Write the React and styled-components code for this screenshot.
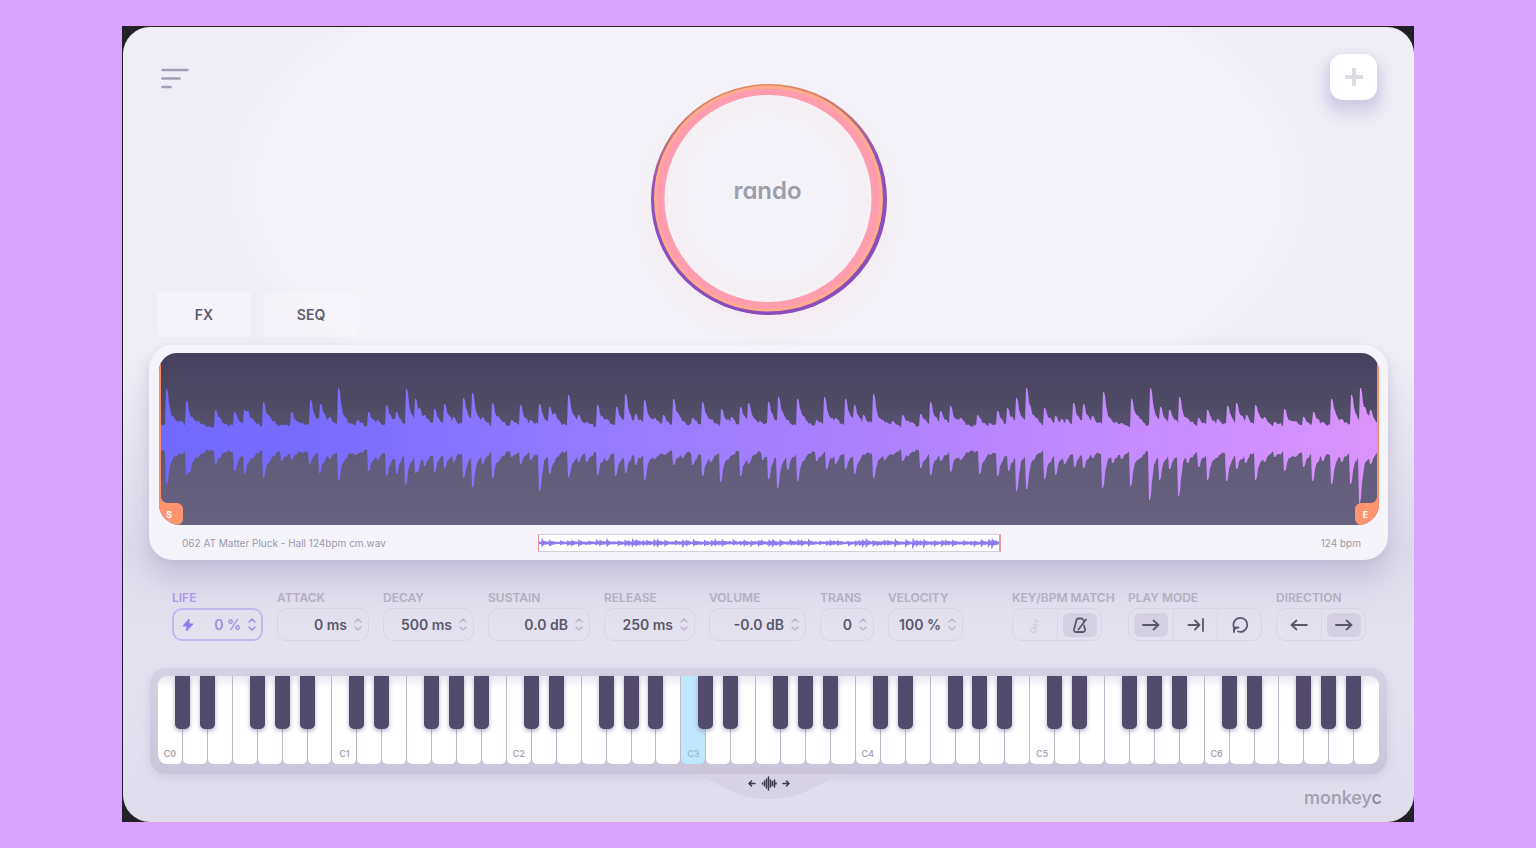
import { useState } from "react";
import styled, { createGlobalStyle, css } from "styled-components";

const GlobalStyle = createGlobalStyle`
  *,
  *::before,
  *::after {
    box-sizing: border-box;
  }
  body {
    margin: 0;
    background: #daa3ff;
    font-family: Inter, "Liberation Sans", sans-serif;
    color: #56526a;
  }
  button {
    padding: 0;
    border: 0;
    background: none;
    font: inherit;
    color: inherit;
    cursor: pointer;
  }
`;

const Page = styled.main`
  min-height: 100vh;
  padding: 26px 122px;
`;
const Frame = styled.div`
  padding: 1px 0 0 1px;
  background: #242028;
`;
const Panel = styled.div`
  border-radius: 27px;
  overflow: hidden;
  background:
    radial-gradient(ellipse 540px 270px at 50% 160px, #f4f3f9 94%, transparent 100%),
    linear-gradient(#efeef6 0, #efeef6 330px, #dedbea 520px, #e5e2f0 620px, #dfdcec 100%);
`;

/* ---- header ---- */
const Header = styled.header`
  display: grid;
  grid-template-columns: 1fr auto 1fr;
  grid-template-rows: auto 1fr;
  padding: 0 34px;
`;
const MenuButton = styled.button`
  justify-self: start;
  height: 28px;
  margin: 38px 0 0 4px;
`;
const AddButton = styled.button`
  display: grid;
  place-items: center;
  justify-self: end;
  width: 47px;
  height: 46px;
  margin: 27px 3px 0 0;
  border-radius: 13px;
  background: #fff;
  box-shadow:
    0 4px 8px rgba(170, 164, 205, 0.3),
    0 10px 12px 7px rgba(190, 184, 218, 0.4);
`;
const Dial = styled.button`
  grid-column: 2;
  grid-row: 1 / 3;
  position: relative;
  width: 236px;
  height: 231px;
  margin: 57px 0 22px;
  border-radius: 50%;
  box-shadow: 0 12px 24px rgba(255, 190, 200, 0.16);
`;
const DialRing = styled.svg`
  display: block;
`;
const DialName = styled.span`
  position: absolute;
  inset: 0;
  display: grid;
  place-items: center;
  padding: 0 2px 18px 0;
  font-size: 24px;
  font-weight: 600;
  line-height: 32px;
  font-feature-settings: "cv11";
  color: #9f9cae;
`;
const Tabs = styled.nav`
  grid-column: 1;
  grid-row: 2;
  align-self: end;
  display: flex;
  gap: 13px;
`;
const Tab = styled.button`
  width: 94px;
  height: 45px;
  padding-bottom: 1px;
  border-radius: 4px;
  background: rgba(247, 246, 251, 0.6);
  font-size: 14px;
  font-weight: 600;
  color: #605c70;
`;

/* ---- sample card ---- */
const SampleCard = styled.section`
  margin: 8px 26px 0;
  padding: 8px 9px 0 10px;
  border-radius: 24px;
  background: #f5f4fa;
  box-shadow:
    0 4px 8px rgba(160, 152, 190, 0.2),
    0 20px 28px rgba(158, 150, 188, 0.34);
`;
const WaveArea = styled.div`
  position: relative;
  height: 172px;
  border-radius: 18px 18px 21px 21px;
  overflow: hidden;
  background: linear-gradient(#45415d, #504b65 30%, #625c7b 62%, #67617f);
`;
const WaveSvg = styled.svg`
  display: block;
  width: 100%;
  height: 100%;
`;
const Marker = styled.div`
  position: absolute;
  top: 8px;
  bottom: 0;
  width: 2px;
  background: #fb8d6b;
  ${(p) => (p.$end ? "right: 0;" : "left: 0;")}
`;
const MarkerHandle = styled.button`
  position: absolute;
  bottom: 0;
  width: 24px;
  height: 22px;
  background: #ff946f;
  font-size: 9px;
  font-weight: 700;
  color: #fff;
  ${(p) =>
    p.$end
      ? "right: 0; padding-right: 3px; border-radius: 7px 0 20px 7px;"
      : "left: 0; padding-right: 4px; border-radius: 0 7px 7px 20px;"}

  &::before {
    content: "";
    position: absolute;
    top: -5px;
    width: 5px;
    height: 5px;
    ${(p) =>
      p.$end
        ? "right: 2px; background: radial-gradient(circle at 0 0, transparent 4px, #ff946f 5px);"
        : "left: 2px; background: radial-gradient(circle at 100% 0, transparent 4px, #ff946f 5px);"}
  }
`;
const SampleFooter = styled.div`
  display: grid;
  grid-template-columns: 1fr 463px 1fr;
  align-items: center;
  height: 35px;
  padding: 0 18px;
  font-size: 10px;
  color: #9c99ab;
`;
const FileName = styled.span`
  padding-left: 5px;
`;
const Overview = styled.div`
  height: 18px;
  border: 1px solid #d3cfe0;
  border-left-color: #e68c9c;
  border-right: 2px solid #e99a98;
  background: #fff;
`;
const Bpm = styled.span`
  text-align: right;
`;

/* ---- controls ---- */
const Controls = styled.section`
  display: flex;
  flex-wrap: wrap;
  justify-content: space-between;
  padding: 30px 48px 0 49px;
`;
const ControlGroup = styled.div`
  display: flex;
  gap: 14px;
`;
const Control = styled.div`
  display: flex;
  flex-direction: column;
  gap: 2px;
`;
const labelText = css`
  font-size: 12px;
  font-weight: 600;
  line-height: 16px;
  white-space: nowrap;
  color: #b3afc1;
`;
const FieldLabel = styled.label`
  ${labelText}
  ${(p) => p.$active && "color: #a898ee;"}
`;
const GroupLabel = styled.span`
  ${labelText}
`;
const Field = styled.div`
  display: flex;
  align-items: center;
  width: ${(p) => p.$width}px;
  height: 33px;
  padding: 0 6px 0 9px;
  border: 1px solid #d8d4e4;
  border-radius: 10px;
  color: #bcb8ca;
  ${(p) =>
    p.$active &&
    css`
      border: 2px solid #c2b8ee;
      padding: 0 5px 0 8px;
      color: #9b8bea;
    `}
`;
const FieldInput = styled.input`
  flex: 1;
  min-width: 0;
  width: 100%;
  padding: 0;
  border: 0;
  outline: 0;
  background: none;
  font: 600 14px/20px Inter, "Liberation Sans", sans-serif;
  text-align: right;
  color: ${(p) => (p.$active ? "#a094de" : "#5b576b")};
`;
const Stepper = styled.span`
  display: flex;
  flex-direction: column;
  gap: 3px;
  margin-left: 7px;
`;
const StepButton = styled.button`
  display: block;
  height: 6px;
  line-height: 0;
`;
const Segments = styled.div`
  display: flex;
  align-self: start;
  height: 33px;
  border: 1px solid #d8d4e4;
  border-radius: 10px;
`;
const Segment = styled.button`
  display: grid;
  place-items: center;
  width: 44px;
  color: #5b576b;

  & + & {
    border-left: 1px solid #dad6e6;
  }
`;
const SegmentFace = styled.span`
  display: grid;
  place-items: center;
  width: 34px;
  height: 24px;
  border-radius: 6px;
  background: ${(p) => (p.$on ? "#d4d0e2" : "transparent")};
`;

/* ---- keyboard ---- */
const Tray = styled.section`
  margin: 27px 27px 0;
  padding: 8px 8px 10px;
  border-radius: 16px;
  background: linear-gradient(#d5d1e2, #cac5d9);
  box-shadow: 0 3px 10px rgba(170, 163, 200, 0.3);
`;
const Keys = styled.div`
  display: flex;
  height: 88px;
`;
const KeySlot = styled.div`
  position: relative;
  flex: 1;
`;
const WhiteKey = styled.button`
  display: flex;
  align-items: flex-end;
  justify-content: center;
  width: 100%;
  height: 100%;
  padding-bottom: 3px;
  border-right: 1px solid #bdb9cb;
  border-radius: 0 0 5px 5px;
  background: ${(p) =>
    p.$pressed ? "#bfe7fe" : "linear-gradient(#ebe9f3, #fff 12px)"};
  font-size: 9px;
  line-height: 14px;
  font-weight: 600;
  color: ${(p) => (p.$pressed ? "#96bcd6" : "#aaa7b4")};

  ${KeySlot}:first-child & {
    border-radius: 9px 0 5px 9px;
  }
  ${KeySlot}:last-child & {
    border-right: 0;
    border-radius: 0 9px 9px 5px;
  }
`;
const BlackKey = styled.button`
  position: absolute;
  top: 0;
  right: -7px;
  z-index: 1;
  width: 15px;
  height: 53px;
  border-radius: 0 0 5px 5px;
  background: #524b6b;
  box-shadow: 0 2px 4px rgba(110, 100, 150, 0.5);
`;

/* ---- footer ---- */
const Footer = styled.footer`
  display: grid;
  grid-template-columns: 1fr 176px 1fr;
  height: 48px;
`;
const RangeHandle = styled.button`
  grid-column: 2;
  height: 28px;
`;
const Brand = styled.a`
  justify-self: end;
  margin: 12px 32px 0 0;
  font-size: 18px;
  font-weight: 500;
  line-height: 24px;
  text-decoration: none;
  color: #a09daf;
`;
const BrandEnd = styled.span`
  color: #8a8799;
`;

// Transients of the loaded sample as [x, y] on the wave canvas.
const CANVAS = { x: 159, y: 353, width: 1220, height: 172, mid: 440 };

const PEAKS_UP = [
  [160, 424], [167, 389], [173, 416], [180, 421], [187, 401], [204, 427], [216, 410], [235, 412], [245, 410], [248, 411],
  [264, 402], [283, 425], [292, 412], [299, 422], [311, 400], [321, 404], [330, 417], [339, 388], [344, 416],
  [358, 420], [369, 412], [378, 420], [387, 405], [397, 412], [407, 389], [416, 399], [420, 408], [425, 415],
  [435, 409], [445, 404], [454, 417], [464, 398], [473, 393], [483, 417], [493, 403], [512, 420],
  [521, 405], [531, 420], [540, 404], [550, 407], [555, 413], [569, 395], [579, 415], [588, 423], [598, 405],
  [607, 419], [617, 407], [626, 394], [636, 414], [645, 400], [655, 418], [664, 415], [674, 399],
  [683, 421], [693, 418], [703, 402], [712, 423], [722, 409], [732, 417], [741, 407], [749, 403],
  [760, 421], [769, 402], [779, 397], [788, 421], [798, 399], [807, 422], [817, 420], [825, 397],
  [836, 418], [846, 399], [855, 405], [864, 415], [874, 394], [883, 420], [893, 421], [903, 415],
  [912, 422], [921, 414], [931, 402], [941, 411], [951, 406], [961, 418], [970, 427], [978, 415],
  [990, 423], [998, 411], [1008, 408], [1017, 398], [1027, 388], [1030, 405], [1037, 418], [1045, 408],
  [1056, 416], [1062, 419], [1067, 419], [1074, 403], [1084, 404], [1093, 416], [1104, 392], [1112, 422],
  [1122, 423], [1132, 399], [1141, 419], [1151, 388], [1161, 407], [1170, 410], [1180, 397],
  [1188, 420], [1199, 418], [1208, 410], [1218, 419], [1228, 406], [1237, 403], [1247, 415],
  [1256, 405], [1265, 417], [1275, 422], [1285, 409], [1294, 421], [1304, 417], [1314, 412],
  [1323, 422], [1332, 399], [1342, 419], [1352, 395], [1361, 388], [1365, 407], [1371, 410], [1376, 422],
];
const PEAKS_DOWN = [
  [167, 484], [187, 475], [190, 472], [216, 464], [235, 471], [245, 474], [264, 478], [282, 461], [292, 460],
  [310, 464], [320, 473], [330, 459], [339, 480], [355, 455], [369, 471], [378, 460], [387, 476],
  [397, 474], [406, 485], [416, 473], [418, 472], [425, 466], [435, 472], [445, 468], [454, 462], [464, 478],
  [473, 487], [483, 464], [493, 478], [512, 457], [521, 464], [531, 460], [540, 491], [550, 474],
  [569, 477], [579, 462], [587, 462], [598, 475], [607, 461], [616, 476], [626, 473], [636, 465],
  [645, 480], [655, 459], [665, 455], [674, 465], [683, 458], [693, 465], [703, 476], [711, 462],
  [721, 482], [741, 476], [749, 464], [763, 460], [769, 479], [778, 488], [788, 470], [798, 481],
  [817, 461], [827, 469], [836, 464], [846, 469], [855, 474], [874, 478], [885, 460], [893, 455],
  [903, 461], [921, 468], [931, 475], [941, 461], [951, 472], [961, 460], [980, 474], [998, 476],
  [1009, 471], [1017, 491], [1027, 489], [1045, 479], [1056, 475], [1065, 464], [1075, 467],
  [1084, 468], [1093, 458], [1103, 488], [1113, 463], [1122, 459], [1131, 486], [1141, 458],
  [1150, 500], [1160, 480], [1170, 469], [1179, 496], [1188, 463], [1199, 467], [1208, 480],
  [1217, 458], [1227, 481], [1237, 469], [1246, 463], [1256, 480], [1265, 462], [1275, 457],
  [1285, 471], [1295, 457], [1304, 467], [1313, 481], [1323, 461], [1332, 484], [1342, 462],
  [1351, 484], [1360, 503], [1363, 470], [1371, 464],
];

// Height of the envelope at x: a narrow attack, then a wide decaying shoulder.
function envelope(peaks, x, floor) {
  const step = Math.floor(x / 2);
  const ripple = Math.sin(step * 2.3) * 1.3 + Math.sin(step * 0.71) * 1.3;
  let height = floor + ripple;
  peaks.forEach(([px, py]) => {
    const dx = x - px;
    const rise = Math.abs(py - CANVAS.mid) - floor;
    if (dx < -2 || dx > 24) return;
    if (dx >= -1 && dx <= 1) {
      height = Math.max(height, floor + rise * (dx === 1 ? 0.9 : 1));
    } else if (dx > 1) {
      const shoulder = Math.min(rise * 0.62, 17) * Math.exp(-(dx - 2) / 7);
      height = Math.max(height, floor + shoulder + ripple * 0.8);
      if (dx < 4) height = Math.max(height, floor + rise * (0.9 - dx * 0.14));
    }
  });
  return height;
}

function buildWave() {
  const top = [];
  const bottom = [];
  for (let x = CANVAS.x; x <= CANVAS.x + CANVAS.width; x += 1) {
    top.push(`${x} ${(CANVAS.mid - envelope(PEAKS_UP, x, 13)).toFixed(1)}`);
    bottom.unshift(`${x} ${(CANVAS.mid + envelope(PEAKS_DOWN, x, 10)).toFixed(1)}`);
  }
  return `M${top.join("L")}L${bottom.join("L")}Z`;
}

const WAVE_PATH = buildWave();
const WAVE_VIEW = `${CANVAS.x} ${CANVAS.y} ${CANVAS.width} ${CANVAS.height}`;

function Wave({ fill, label }) {
  return (
    <WaveSvg viewBox={WAVE_VIEW} preserveAspectRatio="none" role="img" aria-label={label}>
      <defs>
        <linearGradient id="wave" x1="0" x2="1">
          <stop offset="0" stopColor="#7269ff" />
          <stop offset="0.12" stopColor="#786bff" />
          <stop offset="0.35" stopColor="#947aff" />
          <stop offset="0.6" stopColor="#ae82ff" />
          <stop offset="0.8" stopColor="#c58bff" />
          <stop offset="1" stopColor="#dc93fb" />
        </linearGradient>
      </defs>
      <path d={WAVE_PATH} fill={fill} />
    </WaveSvg>
  );
}

const ICONS = {
  note: (
    <g stroke="#d3cfde" strokeWidth="1.5">
      <circle cx="7" cy="14" r="2.5" />
      <path d="M9.5 14V3.5c0 2 1.500 2 3.500 2M8 9h4" />
    </g>
  ),
  metronome: (
    <path d="M10.500 2.500H7.500a2 2 0 0 0-2 1.500L3 13.500a2 2 0 0 0 2 2.500h7a2 2 0 0 0 2-2.500l-1-4M13 6l-1-2.500a1.500 1.500 0 0 0-1.500-1M7.500 13.500l7.500-10" />
  ),
  right: <path d="M1 9h15.500M11.500 4.500L16.500 9l-5 4.500" />,
  rightEnd: <path d="M1.500 9h10.500M8 4.500L12.500 9 8 13.500M16 3v12" />,
  left: <path d="M17 9H1.500M6.500 4.500L1.500 9l5 4.500" />,
  loop: (
    <g>
      <path d="M2.500 10.500A7 7 0 1 1 7 15.500" />
      <path d="M3 11.500v4.500M3 11.500h4.500" />
      <path d="M2.500 11h5l-5 4.500z" fill="currentColor" stroke="none" />
    </g>
  ),
};

function Icon({ name }) {
  return (
    <svg
      width="18"
      height="18"
      viewBox="0 0 18 18"
      fill="none"
      stroke="currentColor"
      strokeWidth="1.8"
      strokeLinecap="round"
      strokeLinejoin="round"
      aria-hidden="true"
    >
      {ICONS[name]}
    </svg>
  );
}

const FIELDS = [
  { id: "life", label: "LIFE", value: "0 %", width: 91, active: true },
  { id: "attack", label: "ATTACK", value: "0 ms", width: 92 },
  { id: "decay", label: "DECAY", value: "500 ms", width: 91 },
  { id: "sustain", label: "SUSTAIN", value: "0.0 dB", width: 102 },
  { id: "release", label: "RELEASE", value: "250 ms", width: 91 },
  { id: "volume", label: "VOLUME", value: "-0.0 dB", width: 97 },
  { id: "trans", label: "TRANS", value: "0", width: 54 },
  { id: "velocity", label: "VELOCITY", value: "100 %", width: 75 },
];

const SEGMENTS = [
  { label: "KEY/BPM MATCH", initial: 1, minWidth: 102, items: ["note", "metronome"] },
  { label: "PLAY MODE", initial: 0, items: ["right", "rightEnd", "loop"] },
  { label: "DIRECTION", initial: 1, items: ["left", "right"] },
];

const SegmentControl = styled(Control)`
  width: ${(p) => (p.$width ? `${p.$width}px` : "auto")};
`;

function NumberField({ id, label, value, width, active }) {
  return (
    <Control>
      <FieldLabel htmlFor={id} $active={active}>
        {label}
      </FieldLabel>
      <Field $width={width} $active={active}>
        {active && (
          <svg width="12" height="14" viewBox="0 0 12 14" aria-hidden="true">
            <path
              d="M7 1L1 8h4L4.500 13 11 6H7z"
              fill="#8f7ff0"
              stroke="#8f7ff0"
              strokeLinejoin="round"
            />
          </svg>
        )}
        <FieldInput id={id} defaultValue={value} $active={active} />
        <Stepper>
          {["M1 5l3-3 3 3", "M1 1l3 3 3-3"].map((d, i) => (
            <StepButton key={d} aria-label={`${label} ${i ? "down" : "up"}`}>
              <svg width="8" height="6" viewBox="0 0 8 6" fill="none" stroke="currentColor" strokeWidth="1.500">
                <path d={d} strokeLinecap="round" strokeLinejoin="round" />
              </svg>
            </StepButton>
          ))}
        </Stepper>
      </Field>
    </Control>
  );
}

function SegmentedField({ label, items, initial, minWidth }) {
  const [selected, setSelected] = useState(initial);
  return (
    <SegmentControl $width={minWidth}>
      <GroupLabel>{label}</GroupLabel>
      <Segments role="group" aria-label={label}>
        {items.map((name, i) => (
          <Segment
            key={name}
            aria-label={name}
            aria-pressed={selected === i}
            onClick={() => setSelected(i)}
          >
            <SegmentFace $on={selected === i}>
              <Icon name={name} />
            </SegmentFace>
          </Segment>
        ))}
      </Segments>
    </SegmentControl>
  );
}

const NOTES = ["C", "D", "E", "F", "G", "A", "B"];
const KEYS = Array.from({ length: 49 }, (_, i) => ({
  note: NOTES[i % 7],
  octave: Math.floor(i / 7),
}));

function Keyboard() {
  const [pressed, setPressed] = useState("C3");
  return (
    <Tray>
      <Keys>
        {KEYS.map(({ note, octave }) => {
          const name = `${note}${octave}`;
          return (
            <KeySlot key={name}>
              <WhiteKey aria-label={name} $pressed={pressed === name} onClick={() => setPressed(name)}>
                {note === "C" && name}
              </WhiteKey>
              {note !== "E" && note !== "B" && <BlackKey aria-label={`${note}#${octave}`} />}
            </KeySlot>
          );
        })}
      </Keys>
    </Tray>
  );
}

function App() {
  return (
    <>
      <GlobalStyle />
      <Page>
        <Frame>
          <Panel>
            <Header>
              <MenuButton aria-label="Menu">
                <svg width="28" height="28" viewBox="0 0 28 28" stroke="#a29db9" strokeWidth="2.500" strokeLinecap="round">
                  <path d="M1.500 5h25M1.500 13.500h17M1.500 22h8" />
                </svg>
              </MenuButton>
              <Dial>
                <DialRing width="236" height="231" viewBox="0 0 236 231" aria-hidden="true">
                  <defs>
                    <linearGradient id="rim" x1="0.35" y1="0" x2="0.5" y2="1">
                      <stop offset="0" stopColor="#e88a58" />
                      <stop offset="0.18" stopColor="#c97476" />
                      <stop offset="0.4" stopColor="#8d50bd" />
                      <stop offset="1" stopColor="#8a4cba" />
                    </linearGradient>
                    <radialGradient id="face">
                      <stop offset="0.75" stopColor="#f4f3f9" />
                      <stop offset="0.95" stopColor="#f6eff4" />
                      <stop offset="1" stopColor="#f5f3f8" />
                    </radialGradient>
                  </defs>
                  <ellipse cx="118" cy="115.5" rx="118" ry="115.5" fill="url(#rim)" />
                  <ellipse cx="117.5" cy="114.5" rx="114.5" ry="113" fill="#ffac8e" />
                  <ellipse cx="117" cy="114.5" rx="111.500" ry="110" fill="#ff9daf" />
                  <circle cx="117" cy="114.5" r="103.5" fill="url(#face)" />
                </DialRing>
                <DialName>rando</DialName>
              </Dial>
              <AddButton aria-label="Add">
                <svg width="20" height="20" viewBox="0 0 20 20" stroke="#dcdbe1" strokeWidth="4">
                  <path d="M10 1v18M1 10h18" />
                </svg>
              </AddButton>
              <Tabs>
                <Tab>FX</Tab>
                <Tab>SEQ</Tab>
              </Tabs>
            </Header>

            <SampleCard>
              <WaveArea>
                <Wave fill="url(#wave)" label="Waveform" />
                <Marker />
                <Marker $end />
                <MarkerHandle>S</MarkerHandle>
                <MarkerHandle $end>E</MarkerHandle>
              </WaveArea>
              <SampleFooter>
                <FileName>062 AT Matter Pluck - Hall 124bpm cm.wav</FileName>
                <Overview>
                  <Wave fill="#8d7cf0" label="Overview" />
                </Overview>
                <Bpm>124 bpm</Bpm>
              </SampleFooter>
            </SampleCard>

            <Controls>
              <ControlGroup>
                {FIELDS.map((field) => (
                  <NumberField key={field.id} {...field} />
                ))}
              </ControlGroup>
              <ControlGroup>
                {SEGMENTS.map((group) => (
                  <SegmentedField key={group.label} {...group} />
                ))}
              </ControlGroup>
            </Controls>

            <Keyboard />

            <Footer>
              <RangeHandle aria-label="Key range">
                <svg width="176" height="28" viewBox="0 0 176 28" fill="none" aria-hidden="true">
                  <path d="M0 0h176c-36 0-44 25-88 25S36 0 0 0z" fill="#d7d3e4" />
                  <g stroke="#3d384f" strokeWidth="1.500" strokeLinecap="round" strokeLinejoin="round">
                    <path d="M74 9.500h-6M70.500 7L68 9.500l2.500 2.500M102 9.500h6M105.500 7l2.500 2.500-2.500 2.500" />
                    <path d="M81.500 9v1M83.500 7v5M85.500 5v9M87.500 3v13M89.500 6v7M91.500 7.500v4M93.500 6v7M95 9v1" />
                  </g>
                </svg>
              </RangeHandle>
              <Brand href="#">
                monkey<BrandEnd>c</BrandEnd>
              </Brand>
            </Footer>
          </Panel>
        </Frame>
      </Page>
    </>
  );
}

export default App;
